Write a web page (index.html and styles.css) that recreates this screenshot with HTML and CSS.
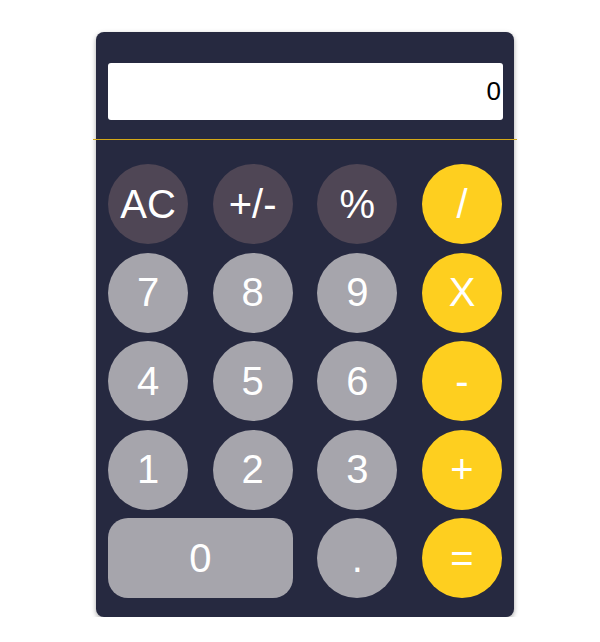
FILE: index.html
```html
<!DOCTYPE html>
<html>
<head>
<meta charset="utf-8">
<link rel="stylesheet" href="styles.css">
</head>
<body>
<div class="calc">
  <div class="display">0</div>
  <div class="rule"></div>
  <div class="keys">
    <button class="key fn">AC</button>
    <button class="key fn">+/-</button>
    <button class="key fn">%</button>
    <button class="key op">/</button>
    <button class="key num">7</button>
    <button class="key num">8</button>
    <button class="key num">9</button>
    <button class="key op">X</button>
    <button class="key num">4</button>
    <button class="key num">5</button>
    <button class="key num">6</button>
    <button class="key op">-</button>
    <button class="key num">1</button>
    <button class="key num">2</button>
    <button class="key num">3</button>
    <button class="key op">+</button>
    <button class="key num zero">0</button>
    <button class="key num">.</button>
    <button class="key op">=</button>
  </div>
</div>
</body>
</html>
```
FILE: styles.css
```css
html, body {
  margin: 0;
  padding: 0;
  background: #ffffff;
}
body {
  font-family: "Liberation Sans", Arial, sans-serif;
}
.calc {
  box-sizing: border-box;
  width: 418px;
  margin: 32px 0 0 96px;
  padding: 31px 12px 19px;
  background: #262940;
  border-radius: 8px;
  box-shadow: 0 2px 5px rgba(0, 0, 0, 0.35);
}
.display {
  height: 57px;
  line-height: 57px;
  background: #ffffff;
  border-radius: 3px;
  text-align: right;
  font-size: 26px;
  color: #000000;
  padding-right: 2px;
  margin-right: -1px;
}
.rule {
  height: 1px;
  background: #d4a817;
  margin: 19px -15px 24px;
}
.keys {
  display: grid;
  grid-template-columns: repeat(4, 80px);
  grid-auto-rows: 80px;
  justify-content: space-between;
  row-gap: 8.5px;
}
.key {
  border: none;
  padding: 0;
  margin: 0;
  border-radius: 50%;
  font-family: "Liberation Sans", Arial, sans-serif;
  font-size: 40px;
  color: #ffffff;
  display: flex;
  align-items: center;
  justify-content: center;
}
.fn {
  background: #4f4655;
}
.num {
  background: #a6a5ac;
}
.op {
  background: #fecf1f;
}
.zero {
  grid-column: span 2;
  border-radius: 20px;
}
```
